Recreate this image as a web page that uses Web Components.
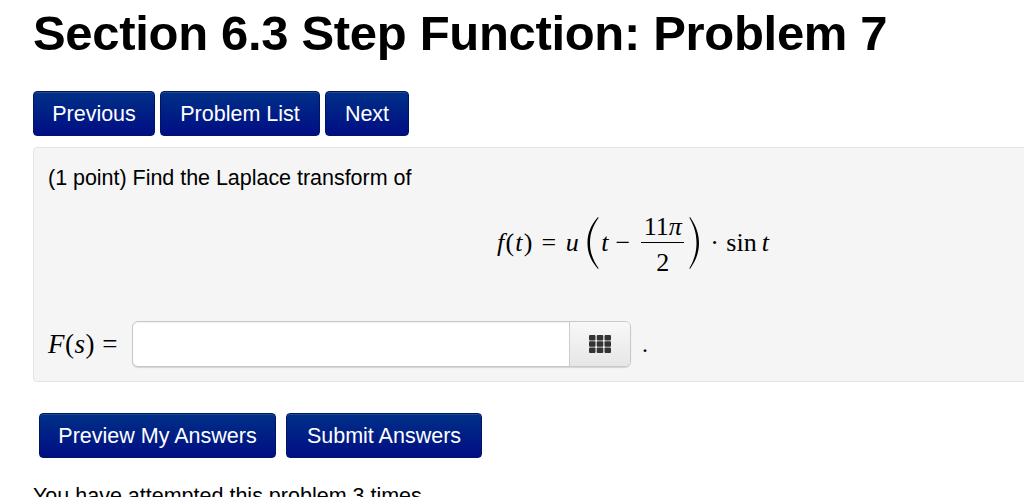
<!DOCTYPE html>
<html>
<head>
<meta charset="utf-8">
<style>
html, body { margin: 0; height: 497px; overflow: hidden; background: #fff; }
body { font-family: "Liberation Sans", Arial, sans-serif; color: #000; }
</style>
</head>
<body>
<template id="problem-page-tpl">
  <style>
    :host { display: block; width: 1024px; height: 497px; overflow: hidden; padding: 0 0 0 33px; box-sizing: border-box; font-size: 21.5px; }
    h1 { margin: 0; padding-top: 7px; height: 91px; box-sizing: border-box; font-size: 49px; line-height: 52px; font-weight: 700; letter-spacing: -.32px; white-space: nowrap; }
    .nav { display: flex; gap: 5px; height: 45px; }
    .submit { display: flex; gap: 10px; margin: 31px 0 0 6px; height: 45px; }
    .attempts { margin-top: 26px; line-height: 24px; white-space: nowrap; }
  </style>
  <h1><slot name="title"></slot></h1>
  <div class="nav"><slot name="nav"></slot></div>
  <slot name="well"></slot>
  <div class="submit"><slot name="submit"></slot></div>
  <div class="attempts"><slot name="attempts"></slot></div>
</template>

<template id="ww-button-tpl">
  <style>
    :host { display: flex; align-items: center; justify-content: center; box-sizing: border-box; height: 45px; padding-top: 2px; border: 1px solid #00155f; border-radius: 4px;
      background: linear-gradient(#003087, #000e84); color: #fff; font-size: 21.5px; white-space: nowrap; box-shadow: inset 0 1px 0 rgba(255,255,255,.12); }
  </style>
  <slot></slot>
</template>

<template id="problem-well-tpl">
  <style>
    :host { display: block; box-sizing: border-box; margin-top: 11px; width: 1067px; height: 235px; padding: 15px 14px 0; background: #f5f5f5; border: 1px solid #e3e3e3; border-radius: 4px; font-size: 21.5px; }
    .intro { line-height: 30px; height: 30px; white-space: nowrap; letter-spacing: -.03px; }
    .display { height: 100px; display: flex; align-items: center; padding-left: 449px; }
    .answer { display: flex; align-items: center; height: 46px; margin-top: 28px; }
  </style>
  <div class="intro"><slot name="intro"></slot></div>
  <div class="display"><slot name="display"></slot></div>
  <div class="answer"><slot name="answer"></slot></div>
</template>

<template id="display-math-tpl">
  <style>
    :host { display: flex; align-items: center; font-family: "Liberation Serif", "Times New Roman", serif; font-size: 26px; color: #000; white-space: pre; height: 60px; }
    i { font-style: italic; }
    .frac { display: inline-flex; flex-direction: column; align-items: center; margin-left: 11px; width: 43px; }
    .frac .num { border-bottom: 1px solid #000; width: 100%; text-align: center; height: 29px; line-height: 27px; }
    .frac .den { height: 30px; line-height: 40px; }
    svg { display: block; width: 13px; height: 54px; fill: #000; }
    .ft { letter-spacing: 1.2px; }
  </style>
  <span class="ft"><i>f</i>(<i>t</i>)</span>
  <span style="margin-left:8px">=</span>
  <span style="margin-left:9.500px"><i>u</i></span>
  <svg style="margin-left:7.500px" viewBox="0 0 13 54"><path d="M12 1 C5 9 1.500 17 1.500 27 C1.500 37 5 45 12 53 L12.600 52.300 C7 44 4 37 4 27 C4 17 7 10 12.600 1.700 Z"/></svg>
  <span style="margin-left:2px"><i>t</i></span>
  <span style="margin-left:7px">−</span>
  <span class="frac"><span class="num">11<i>π</i></span><span class="den">2</span></span>
  <svg style="margin-left:5px" viewBox="0 0 13 54"><path d="M1 1 C6.500 9 10 17 10 27 C10 37 6.500 45 1 53 L.4 52.300 C5 44 7.500 37 7.500 27 C7.500 17 5 10 .4 1.700 Z"/></svg>
  <span style="margin-left:8px">·</span>
  <span style="margin-left:7.500px">sin</span>
  <span style="margin-left:5px"><i>t</i></span>
</template>

<template id="answer-input-tpl">
  <style>
    :host { display: flex; align-items: center; font-size: 21.5px; }
    .label { font-family: "Liberation Serif", "Times New Roman", serif; font-size: 27px; width: 84px; white-space: pre; letter-spacing: .5px; }
    i { font-style: italic; }
    .group { display: flex; height: 46px; width: 499px; box-sizing: border-box; border: 1px solid #c8c8c8; border-radius: 6px; background: #fff; box-shadow: inset 0 1px 1px rgba(0,0,0,.05), 0 1px 1px rgba(0,0,0,.14); overflow: hidden; }
    .field { flex: 1; }
    .pick { width: 60px; border-left: 1px solid #ccc; display: flex; align-items: center; justify-content: center; background: linear-gradient(#f8f8f8, #e6e6e6); }
    .dot { margin: 0 0 1px 11px; font-family: "Liberation Serif", serif; font-size: 24px; line-height: 1; }
    svg { display: block; width: 22px; height: 18px; fill: #333; }
  </style>
  <span class="label"><i>F</i>(<i>s</i>) =</span>
  <div class="group">
    <div class="field"></div>
    <div class="pick">
      <svg viewBox="0 0 22 18">
        <rect x="0" y="0" width="6.500" height="5.500" rx="1"/><rect x="7.750" y="0" width="6.500" height="5.500" rx="1"/><rect x="15.500" y="0" width="6.500" height="5.500" rx="1"/>
        <rect x="0" y="6.250" width="6.500" height="5.500" rx="1"/><rect x="7.750" y="6.250" width="6.500" height="5.500" rx="1"/><rect x="15.500" y="6.250" width="6.500" height="5.500" rx="1"/>
        <rect x="0" y="12.500" width="6.500" height="5.500" rx="1"/><rect x="7.750" y="12.500" width="6.500" height="5.500" rx="1"/><rect x="15.500" y="12.500" width="6.500" height="5.500" rx="1"/>
      </svg>
    </div>
  </div>
  <span class="dot">.</span>
</template>

<problem-page>
  <span slot="title">Section 6.3 Step Function: Problem 7</span>
  <ww-button slot="nav" style="width:122px">Previous</ww-button>
  <ww-button slot="nav" style="width:160px">Problem List</ww-button>
  <ww-button slot="nav" style="width:84px">Next</ww-button>
  <problem-well slot="well">
    <span slot="intro">(1 point) Find the Laplace transform of</span>
    <display-math slot="display"></display-math>
    <answer-input slot="answer"></answer-input>
  </problem-well>
  <ww-button slot="submit" style="width:237px">Preview My Answers</ww-button>
  <ww-button slot="submit" style="width:196px">Submit Answers</ww-button>
  <span slot="attempts">You have attempted this problem 3 times.</span>
</problem-page>

<script>
function register(name, tplId) {
    customElements.define(name, class extends HTMLElement {
        constructor() {
            super();
            this.attachShadow({ mode: "open" })
                .appendChild(document.getElementById(tplId).content.cloneNode(true));
        }
    });
}
register("problem-page", "problem-page-tpl");
register("ww-button", "ww-button-tpl");
register("problem-well", "problem-well-tpl");
register("display-math", "display-math-tpl");
register("answer-input", "answer-input-tpl");
</script>
</body>
</html>
